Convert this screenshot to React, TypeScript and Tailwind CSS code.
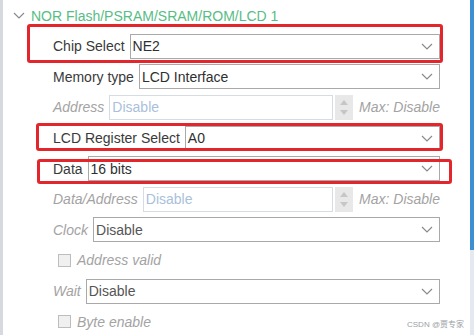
import React from 'react';

const font = { fontFamily: '"Liberation Sans", Arial, sans-serif' };

function Chevron({ className = '' }: { className?: string }) {
  return (
    <svg width="12" height="7" viewBox="0 0 12 7" className={className} aria-hidden>
      <polyline points="1,1 6,6 11,1" fill="none" stroke="#8a8a8a" strokeWidth="1.2" />
    </svg>
  );
}

function Select({ value, dim = false }: { value: string; dim?: boolean }) {
  return (
    <div className="flex h-[25px] flex-1 items-center justify-between border border-[#a9a9a9] bg-white pl-[2px] pr-[6px]">
      <span className={dim ? 'text-[#555]' : 'text-[#2f2f2f]'}>{value}</span>
      <Chevron />
    </div>
  );
}

function Spinner() {
  return (
    <div className="ml-[2px] flex h-[25px] w-[18px] flex-col items-center justify-center gap-[5px] bg-[#e8e8e8]">
      <svg width="8" height="5" viewBox="0 0 8 5" aria-hidden>
        <polygon points="0,5 4,0 8,5" fill="#c6c6c6" />
      </svg>
      <svg width="8" height="5" viewBox="0 0 8 5" aria-hidden>
        <polygon points="0,0 4,5 8,0" fill="#c6c6c6" />
      </svg>
    </div>
  );
}

function Row({ children }: { children: React.ReactNode }) {
  return <div className="flex h-[30.6px] items-center gap-[5px]">{children}</div>;
}

function Label({ children, disabled = false }: { children: React.ReactNode; disabled?: boolean }) {
  return (
    <span className={disabled ? 'italic text-[#a3a3a3]' : 'text-[#3a3a3a]'}>{children}</span>
  );
}

function DisabledNumber({ label }: { label: string }) {
  return (
    <Row>
      <Label disabled>{label}</Label>
      <div className="flex flex-1 items-center">
        <div className="flex h-[25px] flex-1 items-center border border-[#d6dce3] bg-white pl-[2px] text-[#aabfdb]">
          Disable
        </div>
        <Spinner />
        <span className="ml-[6px] italic text-[#a3a3a3]">Max: Disable</span>
      </div>
    </Row>
  );
}

function Check({ label }: { label: string }) {
  return (
    <div className="flex h-[30.6px] items-center pl-[5px]">
      <span className="h-[13px] w-[13px] border border-[#bdbdbd] bg-[#f0f0f0]" />
      <span className="ml-[6px] italic text-[#a3a3a3]">{label}</span>
    </div>
  );
}

export default function App() {
  return (
    <div
      className="relative flex h-[335px] w-[474px] overflow-hidden bg-white text-[14px] leading-[16px]"
      style={font}
    >
      <div className="w-[3px] bg-[#d6d9dd]" />

      <div className="flex-1">
        {/* tree heading */}
        <div className="flex h-[31px] items-start pt-[8px]">
          <Chevron className="ml-[10px] mt-[4px]" />
          <span className="ml-[6px] text-[#58bd85]">NOR Flash/PSRAM/SRAM/ROM/LCD 1</span>
        </div>

        <div className="pl-[50px] pr-[30px]">
          <Row>
            <Label>Chip Select</Label>
            <Select value="NE2" />
          </Row>
          <Row>
            <Label>Memory type</Label>
            <Select value="LCD Interface" />
          </Row>
          <DisabledNumber label="Address" />
          <Row>
            <Label>LCD Register Select</Label>
            <Select value="A0" />
          </Row>
          <Row>
            <Label>Data</Label>
            <Select value="16 bits" />
          </Row>
          <DisabledNumber label="Data/Address" />
          <Row>
            <Label disabled>Clock</Label>
            <Select value="Disable" dim />
          </Row>
          <Check label="Address valid" />
          <Row>
            <Label disabled>Wait</Label>
            <Select value="Disable" dim />
          </Row>
          <Check label="Byte enable" />
        </div>
      </div>

      {/* scrollbar */}
      <div className="flex w-[4px] flex-col">
        <div className="h-[250px] bg-[#3d8fd1]" />
        <div className="flex-1 bg-[#e3e9ef]" />
      </div>

      {/* annotation boxes */}
      <div className="pointer-events-none absolute left-[27px] top-[24px] h-[39px] w-[416px] rounded-[3px] border-[3px] border-[#e3262b]" />
      <div className="pointer-events-none absolute left-[36px] top-[123px] h-[28px] w-[407px] rounded-[3px] border-[3px] border-[#e3262b]" />
      <div className="pointer-events-none absolute left-[37px] top-[159px] h-[25px] w-[415px] rounded-[3px] border-[3px] border-[#e3262b]" />

      <span
        className="absolute left-[407px] top-[320px] whitespace-nowrap text-[8px] leading-[10px] text-[#9aa0a6]"
        style={{ fontFamily: '"Liberation Sans", "Noto Sans CJK SC", sans-serif' }}
      >
        CSDN @贾专家
      </span>
    </div>
  );
}
